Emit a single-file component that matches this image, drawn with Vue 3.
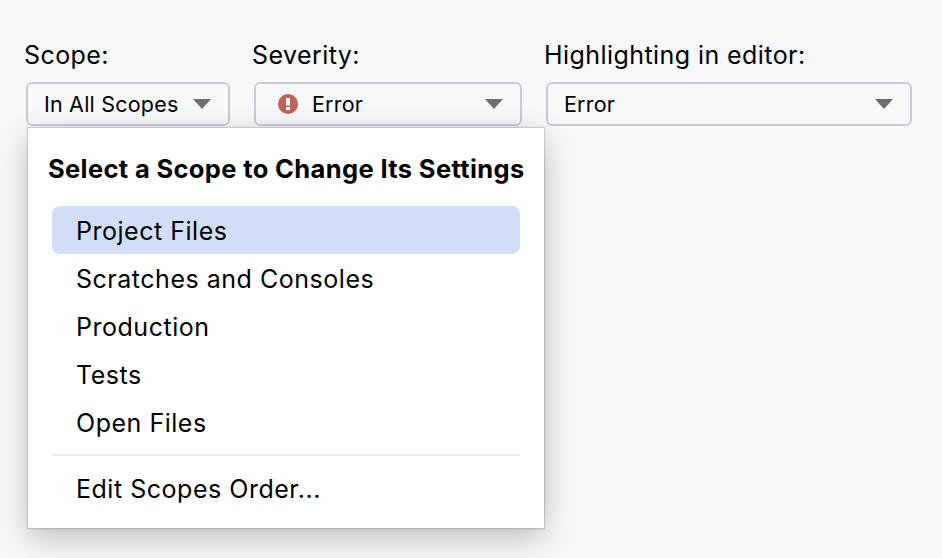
<script setup>
const scopes = ['Project Files', 'Scratches and Consoles', 'Production', 'Tests', 'Open Files']
</script>

<template>
  <div class="page">
    <div class="filters">
      <div class="field scope-field">
        <div class="field-label">Scope:</div>
        <div class="combo">
          <span class="combo-text">In All Scopes</span>
          <span class="arrow"></span>
        </div>
      </div>
      <div class="field severity-field">
        <div class="field-label">Severity:</div>
        <div class="combo">
          <svg class="error-icon" width="20" height="20" viewBox="0 0 20 20">
            <circle cx="10" cy="10" r="10" fill="#c0605a" />
            <rect x="8" y="4" width="4" height="7.5" fill="#fff" />
            <rect x="8" y="13" width="4" height="3" fill="#fff" />
          </svg>
          <span class="combo-text">Error</span>
          <span class="arrow"></span>
        </div>
      </div>
      <div class="field highlight-field">
        <div class="field-label">Highlighting in editor:</div>
        <div class="combo">
          <span class="combo-text">Error</span>
          <span class="arrow"></span>
        </div>
      </div>
    </div>

    <div class="popup">
      <div class="popup-title">Select a Scope to Change Its Settings</div>
      <div
        v-for="(scope, i) in scopes"
        :key="scope"
        class="popup-item"
        :class="{ selected: i === 0 }"
      >{{ scope }}</div>
      <div class="separator"></div>
      <div class="popup-item">Edit Scopes Order...</div>
    </div>
  </div>
</template>

<style>
html, body {
  margin: 0;
  background: #f7f8fa;
}
</style>

<style scoped>
.page {
  position: relative;
  width: 942px;
  height: 558px;
  overflow: hidden;
  background: #f7f8fa;
  font-family: Inter, "Liberation Sans", sans-serif;
  color: #000;
}

.filters {
  display: flex;
  padding: 40px 0 0 24px;
}

.field {
  display: flex;
  flex-direction: column;
}

.scope-field {
  width: 228px;
}

.severity-field {
  width: 292px;
}

.highlight-field {
  width: 368px;
}

.field-label {
  font-size: 25px;
  letter-spacing: 0.43px;
  line-height: 30px;
  height: 42px;
}

.combo {
  display: flex;
  align-items: center;
  box-sizing: border-box;
  height: 44px;
  margin-left: 2px;
  padding: 0 17px 0 16px;
  border: 2px solid #c9ccd6;
  border-radius: 6px;
  font-size: 21.5px;
  letter-spacing: 0.2px;
}

.scope-field .combo {
  width: 204px;
}

.severity-field .combo {
  width: 268px;
  padding-left: 22px;
}

.highlight-field .combo {
  width: 366px;
}

.error-icon {
  margin-right: 14px;
  flex: none;
}

.arrow {
  margin-left: auto;
  width: 0;
  height: 0;
  border-left: 9px solid transparent;
  border-right: 9px solid transparent;
  border-top: 10px solid #6e6e6e;
}

.popup {
  position: absolute;
  left: 28px;
  top: 128px;
  box-sizing: border-box;
  width: 516px;
  height: 400px;
  padding: 26px 24px 0;
  background: #fff;
  box-shadow: 0 0 1px 1px rgba(0, 0, 0, 0.14), 0 10px 30px rgba(0, 0, 0, 0.24);
}

.popup-title {
  font-size: 25.5px;
  font-weight: 700;
  letter-spacing: 0.36px;
  line-height: 30px;
  height: 52px;
  margin-left: -4px;
  white-space: nowrap;
}

.popup-item {
  height: 48px;
  padding-left: 24px;
  border-radius: 8px;
  font-size: 25px;
  letter-spacing: 0.52px;
  line-height: 50px;
}

.popup-item.selected {
  background: #d2def8;
}

.separator {
  height: 2px;
  margin: 8px 0;
  background: #ebecf0;
}
</style>
